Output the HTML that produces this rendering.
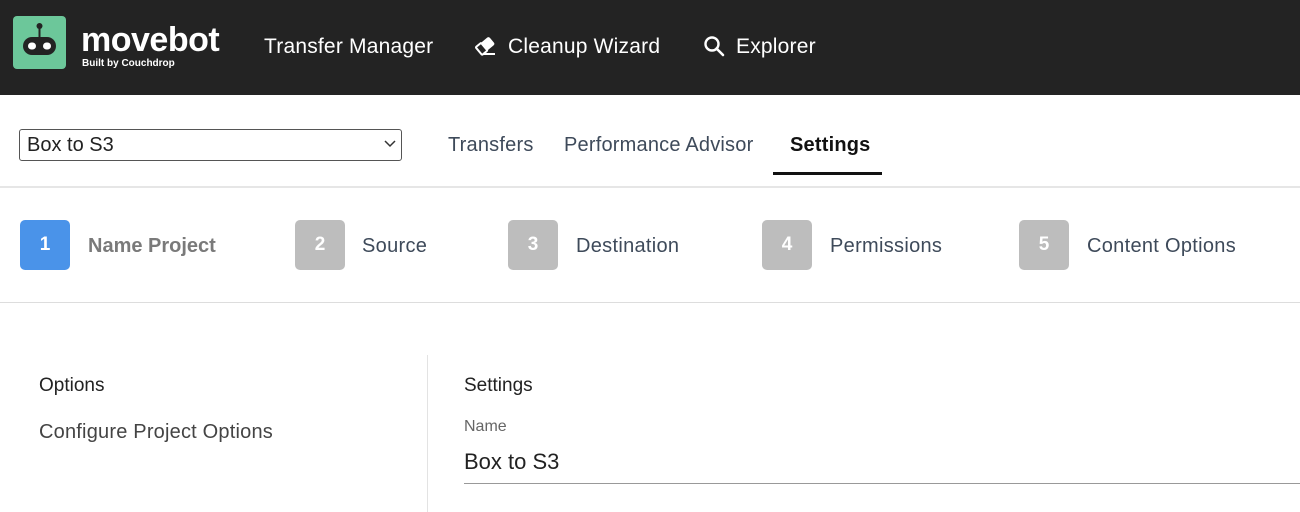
<!DOCTYPE html>
<html><head><meta charset="utf-8">
<style>
*{margin:0;padding:0;box-sizing:border-box}
body{width:1300px;height:512px;overflow:hidden;background:#fff;font-family:"Liberation Sans",sans-serif;position:relative;color:#222}
.abs{position:absolute;white-space:nowrap}
.top{position:absolute;left:0;top:0;width:1300px;height:95px;background:#232323}
.nav{color:#fff;font-size:21px;top:35px;letter-spacing:0.2px}
.sel{left:19px;top:129px;width:383px;height:32px;border:1px solid #555;border-radius:3px;font-size:20px;padding:4px 0 0 7px}
.tab{top:134px;font-size:20px;color:#3e4a5a;letter-spacing:0.2px}
.badge{top:220px;width:50px;height:50px;border-radius:5px;background:#bdbdbd;color:#fff;font-weight:bold;font-size:19px;text-align:center;line-height:50px}
.step{top:235px;font-size:20px;color:#3e4a5a;letter-spacing:0.3px}
</style></head><body>
<div class="top"></div>
<div class="abs" style="left:13px;top:16px;width:53px;height:53px;background:#6cc79a;border-radius:4px"></div>
<svg class="abs" style="left:13px;top:16px" width="53" height="53" viewBox="0 0 53 53">
<line x1="26.5" y1="10" x2="26.5" y2="22" stroke="#232323" stroke-width="2"/>
<circle cx="26.5" cy="10" r="3" fill="#232323"/>
<rect x="10" y="21" width="33" height="18" rx="9" fill="#232323"/>
<rect x="15" y="26.5" width="8" height="7" rx="3.5" fill="#fff"/>
<rect x="30" y="26.5" width="8" height="7" rx="3.5" fill="#fff"/>
</svg>
<div class="abs" style="left:81px;top:21px;color:#fff;font-size:34px;font-weight:bold;letter-spacing:-0.5px">movebot</div>
<div class="abs" style="left:82px;top:58px;color:#fff;font-size:10px;font-weight:bold">Built by Couchdrop</div>
<div class="abs nav" style="left:264px">Transfer Manager</div>
<svg class="abs" style="left:474px;top:36px" width="24" height="20" viewBox="0 0 24 20">
<g transform="rotate(-40 11 10)"><rect x="3" y="5" width="17" height="10" rx="2" fill="#fff"/><rect x="3" y="5" width="7" height="10" rx="1" fill="#232323" stroke="#fff" stroke-width="2"/></g>
<path d="M9 18 H21" stroke="#fff" stroke-width="2"/>
</svg>
<div class="abs nav" style="left:508px">Cleanup Wizard</div>
<svg class="abs" style="left:703px;top:35px" width="22" height="22" viewBox="0 0 22 22">
<circle cx="9" cy="9" r="6.5" fill="none" stroke="#fff" stroke-width="2.4"/>
<line x1="13.5" y1="13.5" x2="20" y2="20" stroke="#fff" stroke-width="2.6" stroke-linecap="round"/>
</svg>
<div class="abs nav" style="left:736px">Explorer</div>

<div class="abs sel">Box to S3</div>
<svg class="abs" style="left:383px;top:139px" width="14" height="10" viewBox="0 0 14 10"><path d="M2 2 L7 7 L12 2" fill="none" stroke="#333" stroke-width="1.5"/></svg>
<div class="abs tab" style="left:448px">Transfers</div>
<div class="abs tab" style="left:564px">Performance Advisor</div>
<div class="abs tab" style="left:790px;color:#111;font-weight:bold">Settings</div>
<div class="abs" style="left:773px;top:172px;width:109px;height:3px;background:#111"></div>
<div class="abs" style="left:0;top:186px;width:1300px;height:2px;background:#e6e6e6"></div>

<div class="abs badge" style="left:20px;background:#4a93e9">1</div>
<div class="abs step" style="left:88px;font-weight:bold;color:#7a7a7a;letter-spacing:0">Name Project</div>
<div class="abs badge" style="left:295px">2</div>
<div class="abs step" style="left:362px">Source</div>
<div class="abs badge" style="left:508px">3</div>
<div class="abs step" style="left:576px">Destination</div>
<div class="abs badge" style="left:762px">4</div>
<div class="abs step" style="left:830px">Permissions</div>
<div class="abs badge" style="left:1019px">5</div>
<div class="abs step" style="left:1087px">Content Options</div>
<div class="abs" style="left:0;top:302px;width:1300px;height:1px;background:#ddd"></div>

<div class="abs" style="left:39px;top:375px;font-size:19px;color:#222">Options</div>
<div class="abs" style="left:39px;top:421px;font-size:20px;color:#444;letter-spacing:0.2px">Configure Project Options</div>
<div class="abs" style="left:427px;top:355px;width:1px;height:157px;background:#e3e3e3"></div>
<div class="abs" style="left:464px;top:375px;font-size:19px;color:#222">Settings</div>
<div class="abs" style="left:464px;top:418px;font-size:16px;color:#666">Name</div>
<div class="abs" style="left:464px;top:449px;font-size:22px;color:#222">Box to S3</div>
<div class="abs" style="left:464px;top:483px;width:836px;height:1px;background:#999"></div>
</body></html>
